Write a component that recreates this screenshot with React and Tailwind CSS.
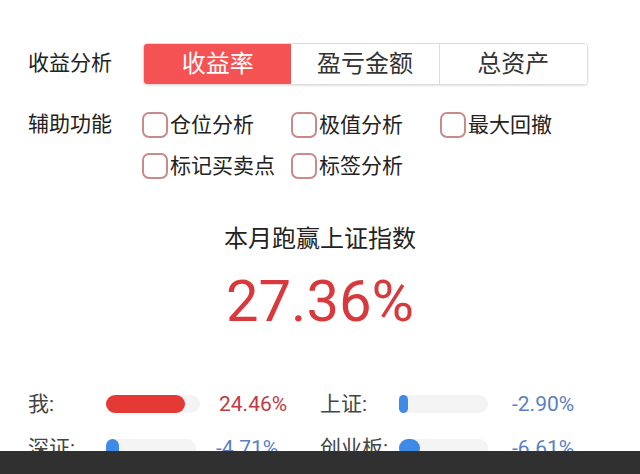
const FONT = { fontFamily: '"Roboto", "Noto Sans CJK SC", sans-serif' };

const tabs = ["收益率", "盈亏金额", "总资产"];
const options = ["仓位分析", "极值分析", "最大回撤", "标记买卖点", "标签分析"];

const compare = [
  { name: "我:", pct: 84, value: "24.46%", up: true, label: "w-[78px]", track: "w-[94px]", gap: "ml-[19px]" },
  { name: "上证:", pct: 10, value: "-2.90%", up: false, label: "w-[79px]", track: "w-[89px]", gap: "ml-[24px]" },
  { name: "深证:", pct: 14, value: "-4.71%", up: false, label: "w-[78px]", track: "w-[90px]", gap: "ml-[20px]" },
  { name: "创业板:", pct: 24, value: "-6.61%", up: false, label: "w-[79px]", track: "w-[89px]", gap: "ml-[24px]" },
];

function Checkbox({ label }) {
  return (
    <label className="flex items-center h-[26px]">
      <span className="w-[26px] h-[26px] rounded-[7px] border-2 border-[#c98a8c] bg-white shrink-0" />
      <span className="ml-[2px] text-[21px] text-[#222] leading-none">{label}</span>
    </label>
  );
}

function Bar({ item }) {
  return (
    <div className="flex items-center h-[24px]">
      <span className={`${item.label} text-[21px] text-[#444] leading-none whitespace-nowrap`}>{item.name}</span>
      <div className={`${item.track} h-[18px] rounded-full bg-[#f4f4f4]`}>
        <div
          className={`h-full rounded-full ${item.up ? "bg-[#e53935]" : "bg-[#3f8ae6]"}`}
          style={{ width: `${item.pct}%`, minWidth: 9 }}
        />
      </div>
      <span
        className={`${item.gap} text-[21px] leading-none ${item.up ? "text-[#bf3a45]" : "text-[#5b7fbf]"}`}
      >
        {item.value}
      </span>
    </div>
  );
}

export default function App() {
  return (
    <div className="w-[640px] h-[474px] bg-white flex flex-col" style={FONT}>
      <div className="h-[451px] overflow-hidden">
        {/* 收益分析 tabs */}
        <div className="flex items-center pl-[28px] pt-[43px]">
          <span className="w-[115px] text-[21px] text-[#222]">收益分析</span>
          <div className="flex w-[445px] h-[42px] rounded-[4px] border border-[#dcdcdc] shadow-[0_1px_2px_rgba(0,0,0,0.12)] overflow-hidden">
            {tabs.map((t, i) => (
              <div
                key={t}
                className={`flex-1 flex items-center justify-center text-[24px] ${
                  i === 0 ? "bg-[#f55353] text-white" : "bg-white text-[#333]"
                } ${i === 2 ? "border-l border-[#dcdcdc]" : ""}`}
              >
                {t}
              </div>
            ))}
          </div>
        </div>

        {/* 辅助功能 */}
        <div className="flex items-start pl-[28px] mt-[27px]">
          <span className="w-[114px] h-[26px] flex items-center text-[21px] text-[#222]">辅助功能</span>
          <div className="grid grid-cols-[149px_149px_149px] gap-y-[15px]">
            {options.map((o) => (
              <Checkbox key={o} label={o} />
            ))}
          </div>
        </div>

        {/* 本月收益 */}
        <div className="flex flex-col items-center mt-[44px]">
          <div className="text-[24px] leading-[32px] text-[#222]">本月跑赢上证指数</div>
          <div className="text-[58px] leading-[64px] text-[#d8393d] mt-[14px]">27.36%</div>
        </div>

        {/* 对比 */}
        <div className="grid grid-cols-[292px_292px] pl-[28px] mt-[59px] gap-y-[20px]">
          {compare.map((c) => (
            <Bar key={c.name} item={c} />
          ))}
        </div>
      </div>
      <div className="flex-1 bg-[#303030]" />
    </div>
  );
}
